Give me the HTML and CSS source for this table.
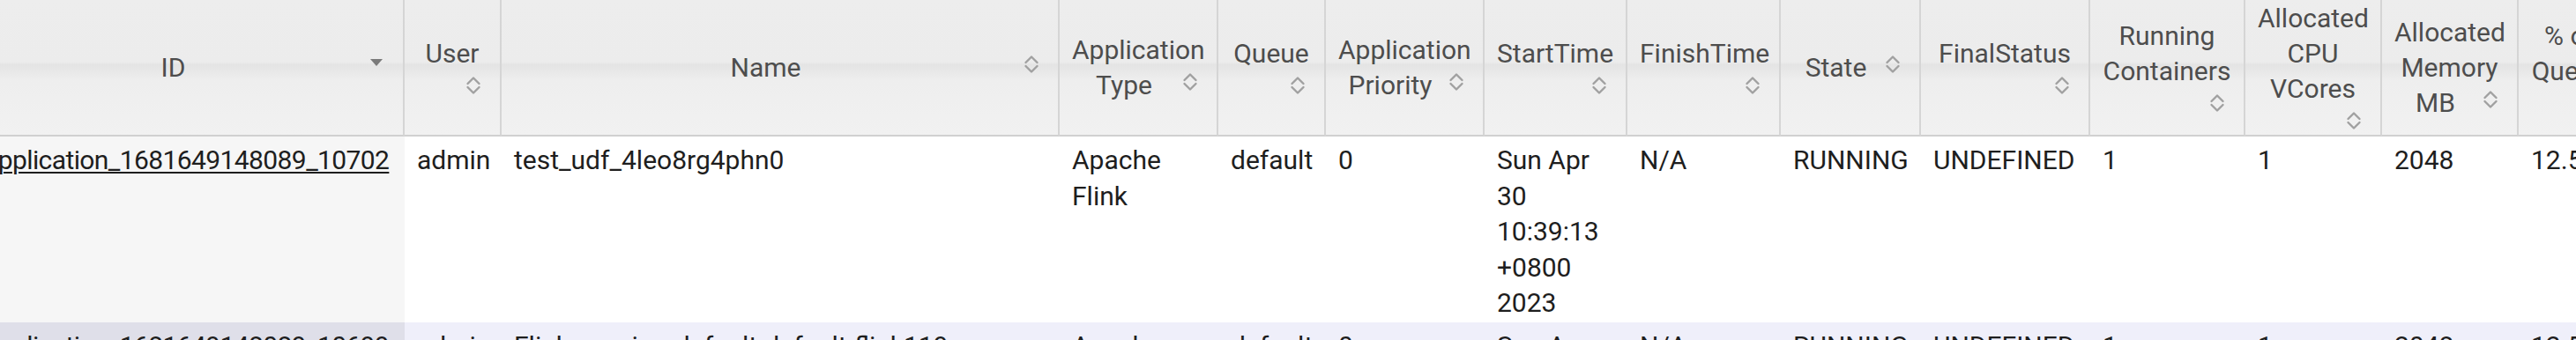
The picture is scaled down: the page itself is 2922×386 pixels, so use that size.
FILE: index.html
```html
<!DOCTYPE html>
<html lang="en">
<head>
<meta charset="utf-8">
<title>Applications</title>
<link rel="stylesheet" href="styles.css">
</head>
<body>
<div class="viewport">
  <table class="apps">
    <thead>
      <tr>
        <th class="c-id"><div class="sw">ID<span class="si"><svg viewBox="0 0 32 32" width="32" height="32"><polygon points="9,10 23,10 16,18" class="tri"/></svg></span></div></th>
        <th class="c-user"><div class="sw">User<span class="si"><svg viewBox="0 0 32 32" width="32" height="32"><polyline points="9.5,14 16,7.5 22.5,14" class="chev"/><polyline points="9.5,18 16,24.5 22.5,18" class="chev"/></svg></span></div></th>
        <th class="c-name"><div class="sw">Name<span class="si"><svg viewBox="0 0 32 32" width="32" height="32"><polyline points="9.5,14 16,7.5 22.5,14" class="chev"/><polyline points="9.5,18 16,24.5 22.5,18" class="chev"/></svg></span></div></th>
        <th class="c-type"><div class="sw">Application Type<span class="si"><svg viewBox="0 0 32 32" width="32" height="32"><polyline points="9.5,14 16,7.5 22.5,14" class="chev"/><polyline points="9.5,18 16,24.5 22.5,18" class="chev"/></svg></span></div></th>
        <th class="c-queue"><div class="sw">Queue<span class="si"><svg viewBox="0 0 32 32" width="32" height="32"><polyline points="9.5,14 16,7.5 22.5,14" class="chev"/><polyline points="9.5,18 16,24.5 22.5,18" class="chev"/></svg></span></div></th>
        <th class="c-prio"><div class="sw">Application Priority<span class="si"><svg viewBox="0 0 32 32" width="32" height="32"><polyline points="9.5,14 16,7.5 22.5,14" class="chev"/><polyline points="9.5,18 16,24.5 22.5,18" class="chev"/></svg></span></div></th>
        <th class="c-start"><div class="sw">StartTime<span class="si"><svg viewBox="0 0 32 32" width="32" height="32"><polyline points="9.5,14 16,7.5 22.5,14" class="chev"/><polyline points="9.5,18 16,24.5 22.5,18" class="chev"/></svg></span></div></th>
        <th class="c-finish"><div class="sw">FinishTime<span class="si"><svg viewBox="0 0 32 32" width="32" height="32"><polyline points="9.5,14 16,7.5 22.5,14" class="chev"/><polyline points="9.5,18 16,24.5 22.5,18" class="chev"/></svg></span></div></th>
        <th class="c-state"><div class="sw">State<span class="si"><svg viewBox="0 0 32 32" width="32" height="32"><polyline points="9.5,14 16,7.5 22.5,14" class="chev"/><polyline points="9.5,18 16,24.5 22.5,18" class="chev"/></svg></span></div></th>
        <th class="c-final"><div class="sw">FinalStatus<span class="si"><svg viewBox="0 0 32 32" width="32" height="32"><polyline points="9.5,14 16,7.5 22.5,14" class="chev"/><polyline points="9.5,18 16,24.5 22.5,18" class="chev"/></svg></span></div></th>
        <th class="c-run"><div class="sw">Running Containers<span class="si"><svg viewBox="0 0 32 32" width="32" height="32"><polyline points="9.5,14 16,7.5 22.5,14" class="chev"/><polyline points="9.5,18 16,24.5 22.5,18" class="chev"/></svg></span></div></th>
        <th class="c-cpu"><div class="sw">Allocated CPU VCores<span class="si"><svg viewBox="0 0 32 32" width="32" height="32"><polyline points="9.5,14 16,7.5 22.5,14" class="chev"/><polyline points="9.5,18 16,24.5 22.5,18" class="chev"/></svg></span></div></th>
        <th class="c-mem"><div class="sw">Allocated Memory MB<span class="si"><svg viewBox="0 0 32 32" width="32" height="32"><polyline points="9.5,14 16,7.5 22.5,14" class="chev"/><polyline points="9.5,18 16,24.5 22.5,18" class="chev"/></svg></span></div></th>
        <th class="c-pq"><div class="sw">% of Queue<span class="si"><svg viewBox="0 0 32 32" width="32" height="32"><polyline points="9.5,14 16,7.5 22.5,14" class="chev"/><polyline points="9.5,18 16,24.5 22.5,18" class="chev"/></svg></span></div></th>
      </tr>
    </thead>
    <tbody>
      <tr class="r-even">
        <td class="id"><a class="applink" href="#">application_1681649148089_10702</a></td>
        <td>admin</td>
        <td>test_udf_4leo8rg4phn0</td>
        <td>Apache Flink</td>
        <td>default</td>
        <td>0</td>
        <td>Sun Apr 30 10:39:13 +0800 2023</td>
        <td>N/A</td>
        <td>RUNNING</td>
        <td>UNDEFINED</td>
        <td>1</td>
        <td>1</td>
        <td>2048</td>
        <td>12.5</td>
      </tr>
      <tr class="r-odd">
        <td class="id"><a class="applink" href="#">application_1681649148089_10699</a></td>
        <td>admin</td>
        <td>Flink-session-default-default-flink119</td>
        <td>Apache Flink</td>
        <td>default</td>
        <td>0</td>
        <td>Sun Apr 30 10:21:05 +0800 2023</td>
        <td>N/A</td>
        <td>RUNNING</td>
        <td>UNDEFINED</td>
        <td>1</td>
        <td>1</td>
        <td>2048</td>
        <td>12.5</td>
      </tr>
    </tbody>
  </table>
</div>
</body>
</html>
```
FILE: styles.css
```css
html, body {
  margin: 0;
  padding: 0;
  background: #ffffff;
}

.viewport {
  width: 2922px;
  height: 386px;
  overflow: hidden;
}

.apps {
  margin-left: -32px;
  width: 3006px;
  table-layout: fixed;
  border-collapse: separate;
  border-spacing: 0;
  font-family: Roboto, "Liberation Sans", Arial, sans-serif;
  font-size: 30px;
}

.apps th {
  box-sizing: border-box;
  height: 155px;
  padding: 0 14px;
  font-weight: normal;
  color: #4d4d4d;
  line-height: 40px;
  text-align: center;
  vertical-align: middle;
  background: linear-gradient(to bottom, #ededed 0%, #ececec 46%, #e4e4e4 48%, #eeeeee 60%, #f1f1f1 100%);
  border-right: 2px solid #d5d5d5;
  border-bottom: 2px solid #d0d0d0;
}

.sw {
  display: block;
}

.si {
  float: right;
  width: 32px;
  height: 32px;
}

.si svg {
  display: block;
}

.chev {
  fill: none;
  stroke: #a0a0a0;
  stroke-width: 2.4;
  stroke-linecap: round;
  stroke-linejoin: round;
}

.tri {
  fill: #7a7a7a;
}

.c-id { width: 491px; }
.c-user { width: 110px; }
.c-name { width: 633px; }
.c-type { width: 180px; }
.c-queue { width: 122px; }
.c-prio { width: 180px; }
.c-start { width: 162px; }
.c-finish { width: 174px; }
.c-state { width: 159px; }
.c-final { width: 192px; }
.c-run { width: 176px; }
.c-cpu { width: 155px; }
.c-mem { width: 155px; }
.c-pq { width: 117px; }

.apps td {
  padding: 7px 14px 1px;
  line-height: 40.5px;
  color: #1e1e1e;
  text-align: left;
  vertical-align: top;
}

.apps td.id {
  letter-spacing: -0.6px;
  white-space: nowrap;
}

.applink {
  color: #1e1e1e;
  text-decoration: underline;
  text-decoration-thickness: 2px;
  text-underline-offset: 3px;
}

.r-even td {
  background: #ffffff;
}

.r-even td.id {
  background: #f6f6f6;
}

.r-odd td {
  background: #efeffa;
}

.r-odd td.id {
  background: #dfdfe9;
}
```
